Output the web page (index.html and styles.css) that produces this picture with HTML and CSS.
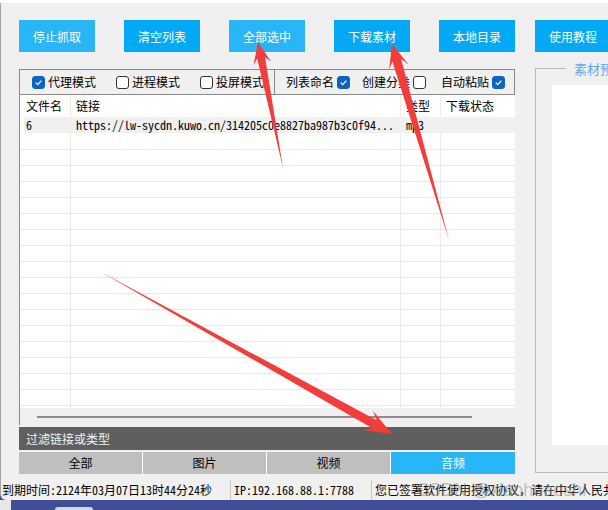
FILE: index.html
```html
<!DOCTYPE html>
<html lang="zh-CN">
<head>
<meta charset="utf-8">
<link rel="stylesheet" href="styles.css">
</head>
<body>
<div class="topstrip"></div>
<div class="window">
  <div class="toolbar">
    <div class="btn light">停止抓取</div>
    <div class="btn">清空列表</div>
    <div class="btn light">全部选中</div>
    <div class="btn">下载素材</div>
    <div class="btn">本地目录</div>
    <div class="btn last">使用教程</div>
  </div>
  <div class="main">
    <div class="left">
      <div class="opts">
        <span class="cb on"><svg viewBox="0 0 13 13"><path d="M3.2 6.6 L5.6 9 L9.9 4.2"/></svg></span><span class="lbl">代理模式</span>
        <span class="cb g20"></span><span class="lbl">进程模式</span>
        <span class="cb g20"></span><span class="lbl">投屏模式</span>
        <span class="sep"></span>
        <span class="lbl g11">列表命名</span><span class="cb on g3"><svg viewBox="0 0 13 13"><path d="M3.2 6.6 L5.6 9 L9.9 4.2"/></svg></span>
        <span class="lbl g12">创建分类</span><span class="cb g3"></span>
        <span class="lbl g15">自动粘贴</span><span class="cb on g3"><svg viewBox="0 0 13 13"><path d="M3.2 6.6 L5.6 9 L9.9 4.2"/></svg></span>
      </div>
      <div class="table">
        <div class="row head"><div class="cell">文件名</div><div class="cell">链接</div><div class="cell">类型</div><div class="cell">下载状态</div></div>
        <div class="row data"><div class="cell mono">6</div><div class="cell mono">https://lw-sycdn.kuwo.cn/314205c0e8827ba987b3c0f94...</div><div class="cell mono">mp3</div><div class="cell"></div></div>
        <div class="row empty first"><div class="cell"></div><div class="cell"></div><div class="cell"></div><div class="cell"></div></div>
        <div class="row empty"><div class="cell"></div><div class="cell"></div><div class="cell"></div><div class="cell"></div></div>
        <div class="row empty"><div class="cell"></div><div class="cell"></div><div class="cell"></div><div class="cell"></div></div>
        <div class="row empty"><div class="cell"></div><div class="cell"></div><div class="cell"></div><div class="cell"></div></div>
        <div class="row empty"><div class="cell"></div><div class="cell"></div><div class="cell"></div><div class="cell"></div></div>
        <div class="row empty"><div class="cell"></div><div class="cell"></div><div class="cell"></div><div class="cell"></div></div>
        <div class="row empty"><div class="cell"></div><div class="cell"></div><div class="cell"></div><div class="cell"></div></div>
        <div class="row empty"><div class="cell"></div><div class="cell"></div><div class="cell"></div><div class="cell"></div></div>
        <div class="row empty"><div class="cell"></div><div class="cell"></div><div class="cell"></div><div class="cell"></div></div>
        <div class="row empty"><div class="cell"></div><div class="cell"></div><div class="cell"></div><div class="cell"></div></div>
        <div class="row empty"><div class="cell"></div><div class="cell"></div><div class="cell"></div><div class="cell"></div></div>
        <div class="row empty"><div class="cell"></div><div class="cell"></div><div class="cell"></div><div class="cell"></div></div>
        <div class="row empty"><div class="cell"></div><div class="cell"></div><div class="cell"></div><div class="cell"></div></div>
        <div class="row empty"><div class="cell"></div><div class="cell"></div><div class="cell"></div><div class="cell"></div></div>
        <div class="row empty"><div class="cell"></div><div class="cell"></div><div class="cell"></div><div class="cell"></div></div>
        <div class="row empty"><div class="cell"></div><div class="cell"></div><div class="cell"></div><div class="cell"></div></div>
        <div class="row empty"><div class="cell"></div><div class="cell"></div><div class="cell"></div><div class="cell"></div></div>
        <div class="row empty"><div class="cell"></div><div class="cell"></div><div class="cell"></div><div class="cell"></div></div>
      </div>
      <div class="hscroll"><div class="thumb"></div></div>
      <div class="filter">过滤链接或类型</div>
      <div class="tabs">
        <div class="tab">全部</div>
        <div class="tab">图片</div>
        <div class="tab">视频</div>
        <div class="tab active">音频</div>
      </div>
    </div>
    <div class="right">
      <div class="group">
        <span class="legend">素材预览</span>
        <div class="preview"></div>
      </div>
    </div>
  </div>
  <div class="status">
    <div class="scell s1">到期时间:2124年03月07日13时44分24秒</div>
    <div class="scell s2">IP:192.168.88.1:7788</div>
    <div class="scell s3">您已签署软件使用授权协议，请在中华人民共和国法律允许范围内使用</div>
  </div>
</div>
<div class="desktop">
  <div class="corner"></div>
  <div class="taskitem"></div>
</div>
<div class="watermark">CSDN @xiaohuaoshi</div>
<svg class="arrows" width="608" height="510" viewBox="0 0 608 510">
  <polygon points="283,168 265.0,56.9 271.1,61.8 258,42 253.5,65.3 257.2,58.5"/>
  <polygon points="449,240 401.1,59.1 408.3,64.3 392,44 389.1,69.8 392.4,61.6"/>
  <polygon points="101,272 376.7,420.3 372.9,410.8 392,434 362.2,430.0 372.3,428.2"/>
</svg>
</body>
</html>
```

FILE: styles.css
```css
* { box-sizing: border-box; margin: 0; padding: 0; }
html, body { width: 608px; height: 510px; overflow: hidden; }
body {
  background: #3e4f97;
  font-family: "Noto Sans CJK SC", "Microsoft YaHei", sans-serif;
  font-size: 12px;
  color: #000;
  position: relative;
}
.topstrip { height: 3px; background: #fff; }
.window {
  height: 497px;
  background: #f0f0f0;
  border-left: 1px solid #a3a3a3;
  border-bottom-left-radius: 6px;
  display: flex;
  flex-direction: column;
  overflow: hidden;
}
.toolbar {
  display: flex;
  gap: 29px;
  height: 49px;
  padding: 17px 0 0 18px;
  white-space: nowrap;
}
.btn {
  flex: none;
  width: 76px;
  height: 32px;
  background: #03a9f4;
  color: #fff;
  display: flex;
  align-items: center;
  justify-content: center;
  font-size: 12px;
}
.btn.light { background: #29b6f6; }
.btn.last { margin-left: -9px; }

.main {
  display: flex;
  align-items: flex-start;
  margin-top: 17px;
  padding-left: 18px;
}
.left { width: 496px; flex: none; }

.opts {
  height: 26px;
  border: 1px solid #8a8a8a;
  display: flex;
  align-items: center;
  padding-left: 12px;
  white-space: nowrap;
  line-height: 16px;
}
.cb {
  flex: none;
  width: 13px;
  height: 13px;
  border: 1px solid #333;
  border-radius: 3px;
  background: #fff;
  display: block;
}
.cb.on { background: #0f62c4; border-color: #0f62c4; }
.cb svg { display: block; width: 11px; height: 11px; }
.cb svg path { fill: none; stroke: #fff; stroke-width: 1.4; }
.lbl { flex: none; width: 48px; margin-left: 3px; }
.g20 { margin-left: 20px; }
.g3 { margin-left: 3px; }
.g11 { margin-left: 11px; }
.g12 { margin-left: 12px; }
.g15 { margin-left: 15px; }
.sep { align-self: stretch; width: 1px; background: #8a8a8a; margin-left: 10px; }

.table {
  height: 313px;
  background: #fff;
  border-left: 1px solid #8a8a8a;
  overflow: hidden;
}
.row {
  display: grid;
  grid-template-columns: 50px 330px 40px 74px;
  height: 16px;
  line-height: 16px;
}
.cell {
  padding-left: 5px;
  border-left: 1px solid #ebebeb;
  overflow: hidden;
  white-space: nowrap;
}
.cell:first-child { border-left: none; padding-left: 6px; }
.row.head { height: 22px; line-height: 22px; }
.row.data { background: linear-gradient(to right, #fff 4px, #f0f0f0 4px); }
.row.data .cell { border-left-color: transparent; }
.row.empty { border-top: 1px solid #e8e8e8; }
.row.empty.first { border-top: none; }
.mono {
  font-family: "Noto Sans Mono CJK SC", "Liberation Mono", monospace;
  font-size: 12px;
}

.hscroll {
  height: 17px;
  background: #f0f0f0;
  border-left: 1px solid #8a8a8a;
  padding: 8px 0 0 17px;
}
.thumb { width: 435px; height: 2px; background: #8c8c8c; }

.filter {
  margin-top: 2px;
  height: 23px;
  line-height: 23px;
  background: #5f5f5f;
  color: #f2f2f2;
  padding-left: 7px;
}
.tabs {
  margin-top: 2px;
  height: 22px;
  display: grid;
  grid-template-columns: 123px 123px 123px 124px;
  gap: 1px;
  background: #fff;
}
.tab {
  background: #bfbfbf;
  text-align: center;
  line-height: 22px;
}
.tab.active { background: #29b6f6; color: #fff; }

.right { margin-left: 20px; margin-top: -1px; flex: none; }
.group {
  position: relative;
  width: 100px;
  height: 405px;
  border: 1px solid #b9b9b9;
  border-right: none;
  padding: 16px 0 0 16px;
}
.legend {
  position: absolute;
  top: -9px;
  left: 30px;
  padding: 0 8px;
  background: #f0f0f0;
  color: #5aa9ef;
  font-size: 13px;
  line-height: 17px;
  white-space: nowrap;
}
.preview { width: 100px; height: 360px; background: #fff; }

.status {
  margin-top: auto;
  height: 26px;
  padding-top: 6px;
  display: flex;
  white-space: nowrap;
  font-family: "Noto Sans Mono CJK SC", "Noto Sans CJK SC", monospace;
  font-size: 12px;
  line-height: 20px;
}
.scell { flex: none; height: 20px; overflow: hidden; }
.s1 { width: 229px; padding-left: 1px; }
.s2 { width: 141px; padding-left: 3px; border-left: 1px solid #c8c8c8; }
.s3 { width: 240px; padding-left: 3px; border-left: 1px solid #c8c8c8; }

.desktop { height: 10px; display: flex; align-items: flex-end; }
.corner { width: 11px; height: 10px; background: #e8e8e8; align-self: stretch; }
.taskitem {
  width: 38px;
  height: 3px;
  margin-left: 44px;
  background: #d4d7e3;
  border-radius: 3px 3px 0 0;
}

.watermark {
  position: absolute;
  left: 416px;
  top: 480px;
  font-family: "Liberation Sans", sans-serif;
  font-size: 18px;
  color: rgba(140, 140, 140, 0.5);
  white-space: nowrap;
}
.arrows { position: absolute; left: 0; top: 0; pointer-events: none; }
.arrows polygon { fill: #f23d3d; }
```
